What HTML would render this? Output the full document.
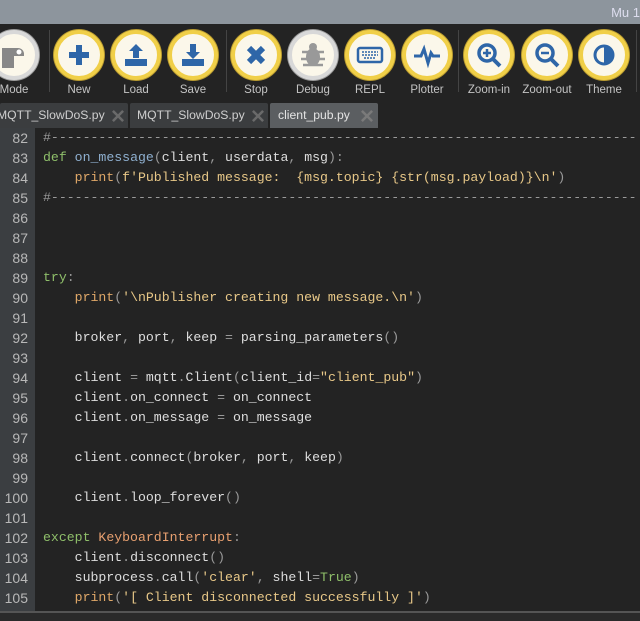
<!DOCTYPE html>
<html><head><meta charset="utf-8"><style>
*{margin:0;padding:0;box-sizing:border-box}
body{width:640px;height:621px;overflow:hidden;background:#232323;font-family:"Liberation Sans",sans-serif;position:relative}
#title{position:absolute;left:0;top:0;width:640px;height:24px;background:#8d959d}
#title span{position:absolute;right:0;top:5px;color:#dde;font-size:13px}
#tb{position:absolute;left:0;top:24px;width:640px;height:78px;background:#232323}
.b{position:absolute;top:6px;width:50px;height:50px;border-radius:50%;background:#fbf7ea;border:4px solid #f0cf48;box-shadow:0 0 0 1px #b89a30}
.b.g{border-color:#d8d8d8;box-shadow:0 0 0 1px #999}
.b svg{position:absolute;left:0;top:0;width:42px;height:42px}
.l{position:absolute;top:60px;width:70px;text-align:center;color:#c4c4c4;font-size:11.5px}
.sep{position:absolute;top:6px;width:1px;height:62px;background:#444}
#tabs{position:absolute;left:0;top:102px;width:640px;height:26px;background:#232323}
.t{position:absolute;top:1px;height:25px;background:#3b3d3f;color:#cfcfcf;font-size:12.2px;padding:5px 0 0 0;border-radius:2px 2px 0 0;overflow:hidden;white-space:nowrap}
.t.a{background:#5b5e61;color:#e4e4e4}
.x{position:absolute;top:7px;width:12px;height:12px;background:#6a6a6a;clip-path:polygon(15% 0,50% 35%,85% 0,100% 15%,65% 50%,100% 85%,85% 100%,50% 65%,15% 100%,0 85%,35% 50%,0 15%)}
#gut{position:absolute;left:0;top:128px;width:35px;height:483px;background:#3b3e41}
#code{position:absolute;left:0;top:128px;width:640px;font-family:"Liberation Mono",monospace;font-size:13.2px;line-height:20px;color:#dedede}
.r{height:20px;white-space:pre;position:relative}
.n{position:absolute;left:0;width:28px;text-align:right;color:#b8b8b8;font-family:"Liberation Sans",sans-serif;font-size:14px}
.c{position:absolute;left:43px}
.k{color:#8fbf6a}.f{color:#8fb0d0}.p{color:#e0a868}.s{color:#e8c888}.cm{color:#9a9a9a}.o{color:#999}.cl{color:#e8a070}
#bot{position:absolute;left:0;top:611px;width:640px;height:10px;background:#2a2a2a;border-top:2px solid #555}
</style></head><body>
<div id="title"><span>Mu 1</span></div>
<div id="tb">
<div class="b g" style="left:-11px"><svg viewBox="0 0 42 42"><path d="M9 14h16a6 6 0 0 1 6 6v2h-10v12h-12z" fill="#888"/><circle cx="26" cy="18" r="2.5" fill="#fff"/></svg></div>
<div class="l" style="left:-21px">Mode</div>
<div class="sep" style="left:49px"></div>
<div class="b" style="left:54px"><svg viewBox="0 0 42 42"><path d="M21 11v20M11 21h20" stroke="#2e66a8" stroke-width="6"/></svg></div><div class="l" style="left:44px">New</div>
<div class="b" style="left:111px"><svg viewBox="0 0 42 42"><path d="M21 10l-7 7h4v7h6v-7h4z" fill="#2e66a8"/><rect x="10" y="25" width="22" height="7" fill="#2e66a8"/></svg></div><div class="l" style="left:101px">Load</div>
<div class="b" style="left:168px"><svg viewBox="0 0 42 42"><path d="M21 25l-7-7h4v-8h6v8h4z" fill="#2e66a8"/><rect x="10" y="25" width="22" height="7" fill="#2e66a8"/></svg></div><div class="l" style="left:158px">Save</div>
<div class="sep" style="left:226px"></div>
<div class="b" style="left:231px"><svg viewBox="0 0 42 42"><path d="M14 14l14 14M28 14l-14 14" stroke="#2e66a8" stroke-width="6"/></svg></div><div class="l" style="left:221px">Stop</div>
<div class="b g" style="left:288px"><svg viewBox="0 0 42 42"><ellipse cx="21" cy="23" rx="7" ry="9" fill="#999"/><path d="M10 18h22M9 25h24M11 31h20" stroke="#999" stroke-width="2.5"/><circle cx="21" cy="13" r="4" fill="#999"/></svg></div><div class="l" style="left:278px">Debug</div>
<div class="b" style="left:345px"><svg viewBox="0 0 42 42"><rect x="9" y="14" width="24" height="14" rx="2" fill="none" stroke="#2e66a8" stroke-width="2.5"/><path d="M13 18h16M13 21h16M15 24h12" stroke="#2e66a8" stroke-width="1.6" stroke-dasharray="2 1"/></svg></div><div class="l" style="left:335px">REPL</div>
<div class="b" style="left:402px"><svg viewBox="0 0 42 42"><path d="M8 22h7l3-7 4 14 3-10 2 3h7" fill="none" stroke="#2e66a8" stroke-width="3"/></svg></div><div class="l" style="left:392px">Plotter</div>
<div class="sep" style="left:458px"></div>
<div class="b" style="left:464px"><svg viewBox="0 0 42 42"><circle cx="19" cy="19" r="8" fill="none" stroke="#2e66a8" stroke-width="3.5"/><path d="M25 25l7 7" stroke="#2e66a8" stroke-width="4"/><path d="M19 15v8M15 19h8" stroke="#2e66a8" stroke-width="2.5"/></svg></div><div class="l" style="left:454px">Zoom-in</div>
<div class="b" style="left:522px"><svg viewBox="0 0 42 42"><circle cx="19" cy="19" r="8" fill="none" stroke="#2e66a8" stroke-width="3.5"/><path d="M25 25l7 7" stroke="#2e66a8" stroke-width="4"/><path d="M15 19h8" stroke="#2e66a8" stroke-width="2.5"/></svg></div><div class="l" style="left:512px">Zoom-out</div>
<div class="b" style="left:579px"><svg viewBox="0 0 42 42"><circle cx="21" cy="21" r="9" fill="none" stroke="#2e66a8" stroke-width="3"/><path d="M21 12a9 9 0 0 1 0 18z" fill="#2e66a8"/></svg></div><div class="l" style="left:569px">Theme</div>
<div class="sep" style="left:636px"></div>
</div>
<div id="tabs">
<div class="t" style="left:0;width:128px"><span style="margin-left:-3px">MQTT_SlowDoS.py</span><span class="x" style="left:112px"></span></div>
<div class="t" style="left:130px;width:138px;padding-left:7px">MQTT_SlowDoS.py<span class="x" style="left:122px"></span></div>
<div class="t a" style="left:270px;width:108px;padding-left:8px">client_pub.py<span class="x" style="left:91px;background:#7a7a7a"></span></div>
</div>
<div id="gut"></div>
<div id="code">
<div class="r"><span class="n">82</span><span class="c cm">#--------------------------------------------------------------------------</span></div>
<div class="r"><span class="n">83</span><span class="c"><span class="k">def</span> <span class="f">on_message</span><span class="o">(</span>client<span class="o">,</span> userdata<span class="o">,</span> msg<span class="o">):</span></span></div>
<div class="r"><span class="n">84</span><span class="c">    <span class="p">print</span><span class="o">(</span><span class="s">f'Published message:  {msg.topic} {str(msg.payload)}\n'</span><span class="o">)</span></span></div>
<div class="r"><span class="n">85</span><span class="c cm">#--------------------------------------------------------------------------</span></div>
<div class="r"><span class="n">86</span></div>
<div class="r"><span class="n">87</span></div>
<div class="r"><span class="n">88</span></div>
<div class="r"><span class="n">89</span><span class="c"><span class="k">try</span><span class="o">:</span></span></div>
<div class="r"><span class="n">90</span><span class="c">    <span class="p">print</span><span class="o">(</span><span class="s">'\nPublisher creating new message.\n'</span><span class="o">)</span></span></div>
<div class="r"><span class="n">91</span></div>
<div class="r"><span class="n">92</span><span class="c">    broker<span class="o">,</span> port<span class="o">,</span> keep <span class="o">=</span> parsing_parameters<span class="o">()</span></span></div>
<div class="r"><span class="n">93</span></div>
<div class="r"><span class="n">94</span><span class="c">    client <span class="o">=</span> mqtt<span class="o">.</span>Client<span class="o">(</span>client_id<span class="o">=</span><span class="s">"client_pub"</span><span class="o">)</span></span></div>
<div class="r"><span class="n">95</span><span class="c">    client<span class="o">.</span>on_connect <span class="o">=</span> on_connect</span></div>
<div class="r"><span class="n">96</span><span class="c">    client<span class="o">.</span>on_message <span class="o">=</span> on_message</span></div>
<div class="r"><span class="n">97</span></div>
<div class="r"><span class="n">98</span><span class="c">    client<span class="o">.</span>connect<span class="o">(</span>broker<span class="o">,</span> port<span class="o">,</span> keep<span class="o">)</span></span></div>
<div class="r"><span class="n">99</span></div>
<div class="r"><span class="n">100</span><span class="c">    client<span class="o">.</span>loop_forever<span class="o">()</span></span></div>
<div class="r"><span class="n">101</span></div>
<div class="r"><span class="n">102</span><span class="c"><span class="k">except</span> <span class="cl">KeyboardInterrupt</span><span class="o">:</span></span></div>
<div class="r"><span class="n">103</span><span class="c">    client<span class="o">.</span>disconnect<span class="o">()</span></span></div>
<div class="r"><span class="n">104</span><span class="c">    subprocess<span class="o">.</span>call<span class="o">(</span><span class="s">'clear'</span><span class="o">,</span> shell<span class="o">=</span><span class="k">True</span><span class="o">)</span></span></div>
<div class="r"><span class="n">105</span><span class="c">    <span class="p">print</span><span class="o">(</span><span class="s">'[ Client disconnected successfully ]'</span><span class="o">)</span></span></div>
</div>
<div id="bot"></div>
</body></html>
